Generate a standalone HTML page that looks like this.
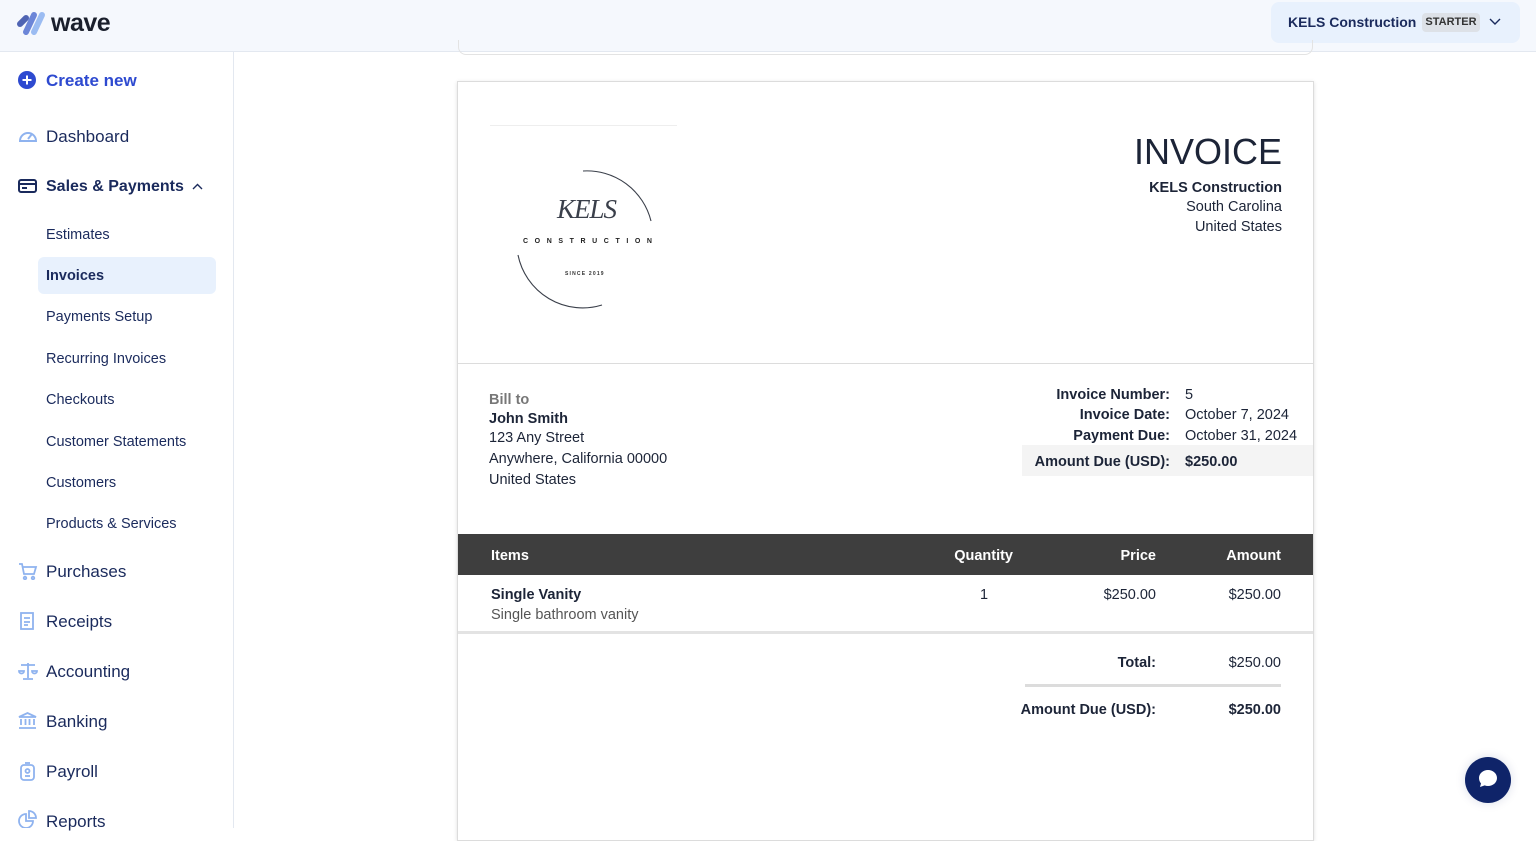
<!DOCTYPE html>
<html><head><meta charset="utf-8">
<style>
*{margin:0;padding:0;box-sizing:border-box}
body{width:1536px;height:828px;overflow:hidden;background:#fff;font-family:"Liberation Sans",sans-serif;position:relative;color:#1c2437}
.a{position:absolute;white-space:nowrap}
.hdr{left:0;top:0;width:1536px;height:52px;background:#f5f8fd;border-bottom:1px solid #e3e8f0}
.side{left:0;top:52px;width:234px;height:776px;border-right:1px solid #e3e8f0;background:#fff}
.nav{font-size:17px;color:#1a2a5c}
.sub{font-size:14.5px;color:#1a2a5c}
.r{text-align:right}
.t{font-size:14.5px;color:#1c2437}
.m{margin-top:2px}
</style></head><body>
<div class="a hdr"></div>
<svg class="a" style="left:16px;top:10px" width="30" height="26" viewBox="0 0 30 26"><path d="M4 14 L10 8" stroke="#4f64b3" stroke-width="6" stroke-linecap="round"/><path d="M10 22 L18 5" stroke="#6c86d8" stroke-width="6" stroke-linecap="round"/><path d="M18 22 L26 5" stroke="#9bbcf2" stroke-width="6" stroke-linecap="round"/></svg>
<div class="a" style="left:51px;top:9px;font-size:25px;font-weight:700;color:#1a1f2c;letter-spacing:-0.5px">wave</div>
<div class="a" style="left:1271px;top:2px;width:249px;height:41px;background:#e8f1fd;border-radius:8px"></div>
<div class="a" style="left:1288px;top:14px;font-size:14px;font-weight:700;color:#1a2a5c">KELS Construction</div>
<div class="a" style="left:1422px;top:13px;width:58px;height:19px;background:#dde1e7;border-radius:4px;font-size:11px;font-weight:700;color:#333;text-align:center;line-height:19px">STARTER</div>
<svg class="a" style="left:1489px;top:18px" width="12" height="8"><path d="M1 1 L6 6 L11 1" stroke="#1a2a5c" fill="none" stroke-width="1.4"/></svg>

<div class="a side"></div>
<svg class="a" style="left:18px;top:71px" width="18" height="18"><circle cx="9" cy="9" r="9" fill="#2e4ad0"/><path d="M9 4.5V13.5M4.5 9H13.5" stroke="#fff" stroke-width="2"/></svg>
<div class="a" style="left:46px;top:71px;font-size:17px;font-weight:700;color:#2e4ad0">Create new</div>
<svg class="a" style="left:18px;top:128px" width="20" height="14"><path d="M2 13 A8 8 0 1 1 18 13 Z" fill="none" stroke="#8fb3ef" stroke-width="2"/><path d="M10 11 L14 6" stroke="#8fb3ef" stroke-width="2"/></svg>
<div class="a nav" style="left:46px;top:127px">Dashboard</div>
<svg class="a" style="left:18px;top:179px" width="19" height="14"><rect x="1" y="1" width="17" height="12" rx="2" fill="none" stroke="#1a2a5c" stroke-width="2"/><path d="M1 5H18M4 9H9" stroke="#1a2a5c" stroke-width="2"/></svg>
<div class="a nav" style="left:46px;top:178px;font-weight:700;font-size:16px">Sales &amp; Payments</div>
<svg class="a" style="left:192px;top:183px" width="11" height="7"><path d="M1 6L5.5 1.5L10 6" stroke="#1a2a5c" fill="none" stroke-width="1.4"/></svg>
<div class="a sub" style="left:46px;top:227px">Estimates</div>
<div class="a" style="left:38px;top:257px;width:178px;height:37px;background:#e8f1fd;border-radius:6px"></div>
<div class="a sub" style="left:46px;top:268px;font-weight:700">Invoices</div>
<div class="a sub" style="left:46px;top:309px">Payments Setup</div>
<div class="a sub" style="left:46px;top:351px">Recurring Invoices</div>
<div class="a sub" style="left:46px;top:392px">Checkouts</div>
<div class="a sub" style="left:46px;top:434px">Customer Statements</div>
<div class="a sub" style="left:46px;top:475px">Customers</div>
<div class="a sub" style="left:46px;top:516px">Products &amp; Services</div>
<svg class="a" style="left:18px;top:562px" width="20" height="18" fill="none" stroke="#8fb3ef" stroke-width="1.8"><path d="M1 2H4L6 12H16L18 5H5"/><circle cx="7" cy="16" r="1.3"/><circle cx="15" cy="16" r="1.3"/></svg>
<div class="a nav" style="left:46px;top:562px">Purchases</div>
<svg class="a" style="left:20px;top:612px" width="14" height="18" fill="none" stroke="#8fb3ef" stroke-width="1.8"><rect x="1" y="1" width="12" height="16"/><path d="M4 6H10M4 10H10M4 13H8"/></svg>
<div class="a nav" style="left:46px;top:612px">Receipts</div>
<svg class="a" style="left:18px;top:662px" width="20" height="18" fill="none" stroke="#8fb3ef" stroke-width="1.8"><path d="M10 1V16M3 3H17M5 17H15M1 9A2.5 2.5 0 0 0 6 9ZM14 9A2.5 2.5 0 0 0 19 9Z"/></svg>
<div class="a nav" style="left:46px;top:662px">Accounting</div>
<svg class="a" style="left:18px;top:712px" width="19" height="17" fill="none" stroke="#8fb3ef" stroke-width="1.8"><path d="M1 5L9.5 1L18 5ZM3 7V13M7.5 7V13M11.5 7V13M16 7V13M1 16H18"/></svg>
<div class="a nav" style="left:46px;top:712px">Banking</div>
<svg class="a" style="left:20px;top:762px" width="15" height="19" fill="none" stroke="#8fb3ef" stroke-width="1.8"><rect x="1" y="3" width="13" height="15" rx="3"/><path d="M5 1H10"/><circle cx="7.5" cy="9" r="2"/><path d="M5 14H10"/></svg>
<div class="a nav" style="left:46px;top:762px">Payroll</div>
<svg class="a" style="left:18px;top:810px" width="20" height="18" fill="none" stroke="#8fb3ef" stroke-width="1.8"><path d="M8 4A7 7 0 1 0 15 11H8Z"/><path d="M11 1V8H18A7 7 0 0 0 11 1Z"/></svg>
<div class="a nav" style="left:46px;top:812px">Reports</div>

<div class="a" style="left:458px;top:40px;width:855px;height:15px;border:1px solid #e3e3e3;border-top:none;border-radius:0 0 8px 8px"></div>
<div class="a" style="left:457px;top:81px;width:857px;height:760px;border:1px solid #dcdcdc;box-shadow:0 1px 4px rgba(0,0,0,.12);background:#fff"></div>
<div class="a" style="left:490px;top:125px;width:187px;height:1px;background:#eee"></div>
<svg class="a" style="left:505px;top:165px" width="160" height="145" fill="none" stroke="#3a3f4a" stroke-width="1.1">
<path d="M78 6 A66 66 0 0 1 146 56"/><path d="M13 90 A66 66 0 0 0 97 140"/></svg>
<div class="a" style="left:557px;top:194px;font-family:'Liberation Serif',serif;font-style:italic;font-size:27px;color:#3a3f4a;letter-spacing:-1px">KELS</div>
<div class="a" style="left:523px;top:238px;font-size:7px;font-weight:700;letter-spacing:6.6px;color:#222">CONSTRUCTION</div>
<div class="a" style="left:565px;top:271px;font-size:5px;font-weight:700;letter-spacing:1.2px;color:#333">SINCE 2019</div>
<div class="a r" style="right:254px;top:131px;font-size:36px;color:#1c2437">INVOICE</div>
<div class="a r t" style="right:254px;top:180px;font-weight:700">KELS Construction</div>
<div class="a r t" style="right:254px;top:199px">South Carolina</div>
<div class="a r t" style="right:254px;top:219px">United States</div>
<div class="a" style="left:458px;top:363px;width:855px;height:1px;background:#dcdcdc"></div>
<div class="a t" style="left:489px;top:392px;color:#777;font-weight:700">Bill to</div>
<div class="a t" style="left:489px;top:411px;font-weight:700">John Smith</div>
<div class="a t" style="left:489px;top:430px">123 Any Street</div>
<div class="a t" style="left:489px;top:451px">Anywhere, California 00000</div>
<div class="a t" style="left:489px;top:472px">United States</div>
<div class="a r t" style="right:366px;top:387px;font-weight:700">Invoice Number:</div>
<div class="a t" style="left:1185px;top:387px">5</div>
<div class="a r t" style="right:366px;top:407px;font-weight:700">Invoice Date:</div>
<div class="a t" style="left:1185px;top:407px">October 7, 2024</div>
<div class="a r t" style="right:366px;top:428px;font-weight:700">Payment Due:</div>
<div class="a t" style="left:1185px;top:428px">October 31, 2024</div>
<div class="a" style="left:1022px;top:445px;width:291px;height:31px;background:#f4f4f4"></div>
<div class="a r t" style="right:366px;top:454px;font-weight:700">Amount Due (USD):</div>
<div class="a t" style="left:1185px;top:454px;font-weight:700">$250.00</div>
<div class="a" style="left:458px;top:534px;width:855px;height:41px;background:#3e3e3e"></div>
<div class="a t" style="left:491px;top:548px;color:#fff;font-weight:700">Items</div>
<div class="a r t" style="right:523px;top:548px;color:#fff;font-weight:700">Quantity</div>
<div class="a r t" style="right:380px;top:548px;color:#fff;font-weight:700">Price</div>
<div class="a r t" style="right:255px;top:548px;color:#fff;font-weight:700">Amount</div>
<div class="a t" style="left:491px;top:587px;font-weight:700">Single Vanity</div>
<div class="a t" style="left:491px;top:607px;color:#555">Single bathroom vanity</div>
<div class="a t" style="left:980px;top:587px">1</div>
<div class="a r t" style="right:380px;top:587px">$250.00</div>
<div class="a r t" style="right:255px;top:587px">$250.00</div>
<div class="a" style="left:458px;top:631px;width:855px;height:3px;background:#e3e3e3"></div>
<div class="a r t" style="right:380px;top:655px;font-weight:700">Total:</div>
<div class="a r t" style="right:255px;top:655px">$250.00</div>
<div class="a" style="left:1025px;top:684px;width:256px;height:3px;background:#dcdcdc"></div>
<div class="a r t" style="right:380px;top:702px;font-weight:700">Amount Due (USD):</div>
<div class="a r t" style="right:255px;top:702px;font-weight:700">$250.00</div>

<div class="a" style="left:1465px;top:757px;width:46px;height:46px;border-radius:50%;background:#0f2469;box-shadow:0 0 10px rgba(15,36,105,.15)"></div>
<svg class="a" style="left:1476px;top:767px" width="24" height="24"><path d="M12 3C17 3 21 6.5 21 11C21 15.5 17 19 12 19C10.8 19 9.7 18.8 8.7 18.4L4 20L5 16.5C3.8 15 3 13 3 11C3 6.5 7 3 12 3Z" fill="#fff"/></svg>
</body></html>
